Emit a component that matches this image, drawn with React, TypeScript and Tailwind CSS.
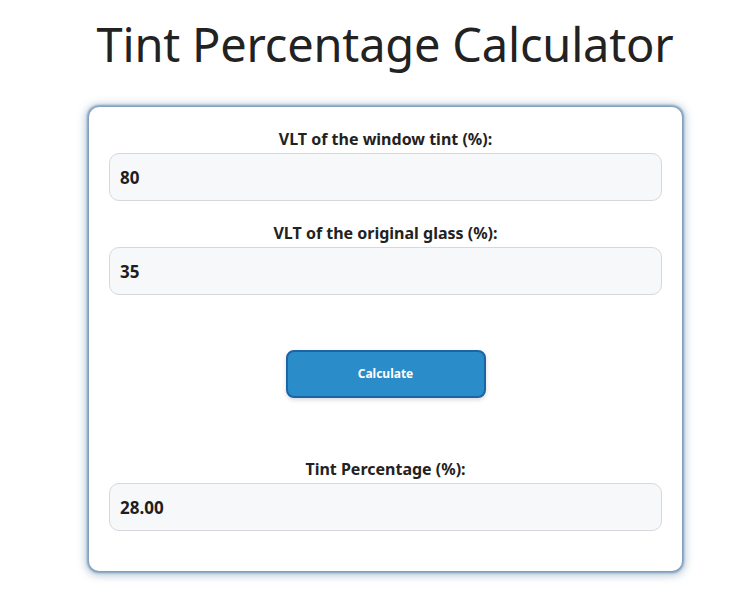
import React, { useState } from 'react'

const Field: React.FC<{
  label: string
  value: string
  onChange?: (v: string) => void
  readOnly?: boolean
}> = ({ label, value, onChange, readOnly }) => (
  <div className="flex flex-col">
    <label className="text-center text-[16px] font-bold leading-[20px] text-[#222] mb-[4px]">
      {label}
    </label>
    <input
      className="h-[48px] w-full rounded-[10px] border border-[#d6d8db] bg-[#f7f8fa] px-[10px] text-[17px] font-bold text-[#1e1e1e] outline-none"
      value={value}
      readOnly={readOnly}
      onChange={(e) => onChange && onChange(e.target.value)}
    />
  </div>
)

const App: React.FC = () => {
  const [tint, setTint] = useState('80')
  const [glass, setGlass] = useState('35')
  const [result, setResult] = useState('28.00')

  const calculate = () => {
    const t = parseFloat(tint)
    const g = parseFloat(glass)
    if (!isNaN(t) && !isNaN(g)) {
      setResult(((t * g) / 100).toFixed(2))
    }
  }

  return (
    <div className="min-h-[605px] w-[754px] bg-white font-['Noto_Sans',sans-serif]">
      <h1 className="pt-[12px] pl-[16px] text-center text-[47px] font-normal leading-[64px] text-[#222] tracking-[-0.2px]">
        Tint Percentage Calculator
      </h1>
      <div className="mx-[89px] mt-[31px] w-[593px] rounded-[10px] bg-white px-[20px] pt-[22px] pb-[40px] shadow-[0_0_2px_2px_rgba(110,145,180,0.8),0_1px_9px_3px_rgba(100,135,170,0.5)]">
        <Field label="VLT of the window tint (%):" value={tint} onChange={setTint} />
        <div className="mt-[22px]">
          <Field label="VLT of the original glass (%):" value={glass} onChange={setGlass} />
        </div>
        <div className="mt-[55px] flex justify-center">
          <button
            onClick={calculate}
            className="h-[48px] w-[200px] rounded-[8px] border-2 border-[#1b64a6] bg-[#2a8cc8] text-[12px] font-bold text-white shadow-[0_2px_4px_rgba(0,0,0,0.15)]"
          >
            Calculate
          </button>
        </div>
        <div className="mt-[61px]">
          <Field label="Tint Percentage (%):" value={result} readOnly />
        </div>
      </div>
    </div>
  )
}

export default App
